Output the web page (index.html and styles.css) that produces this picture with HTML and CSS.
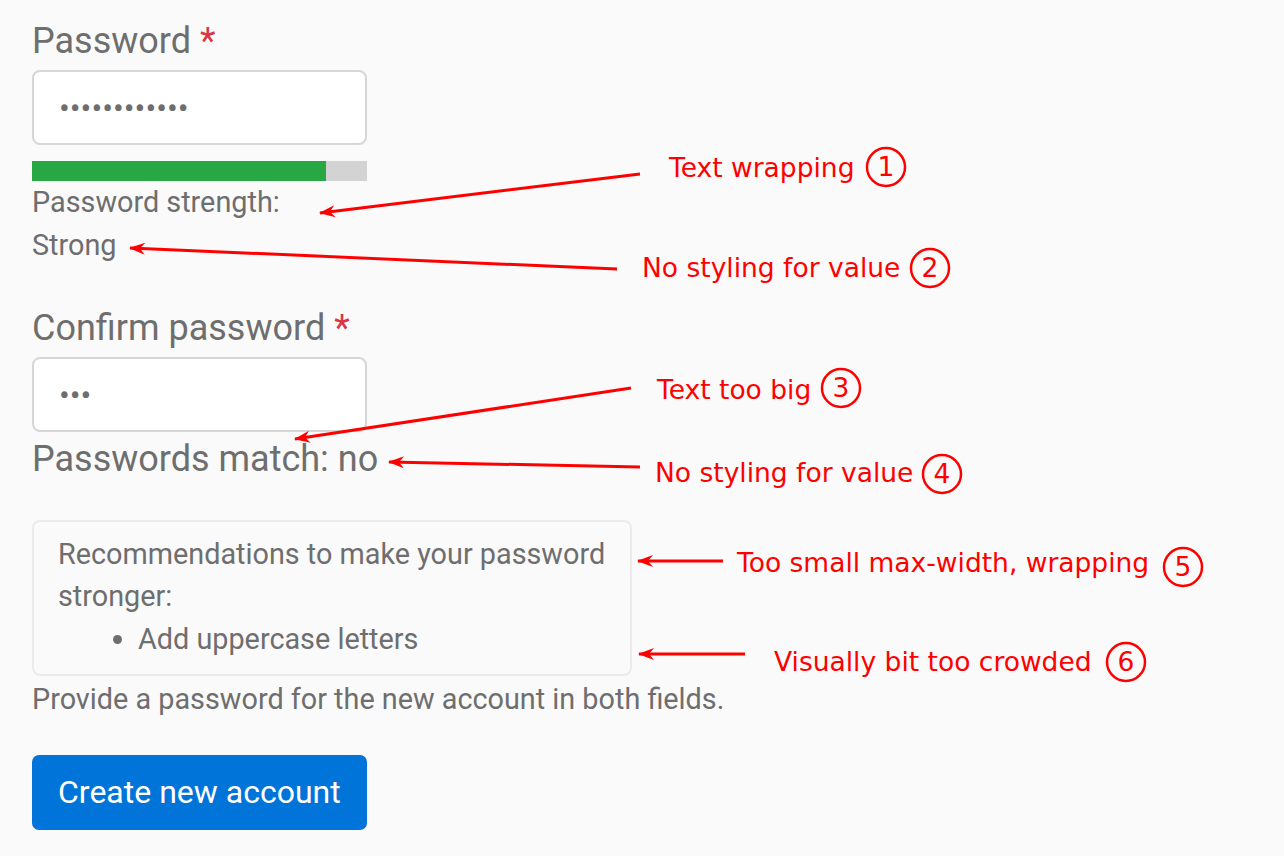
FILE: index.html
```html
<!DOCTYPE html>
<html lang="en">
<head>
    <meta charset="UTF-8">
    <meta name="viewport" content="width=device-width, initial-scale=1.0">
    <title>Create new account</title>
    <link rel="stylesheet" href="styles.css">
</head>
<body>

<form class="signup" onsubmit="return false">
    <div class="field">
        <label class="field-label" for="pass1">Password <span class="req">*</span></label>
        <input type="password" id="pass1" class="text-input" value="aZ8kq2mLp4vx">
        <div class="strength-bar">
            <div class="strength-fill" style="width: 87.8%"></div>
        </div>
        <div class="strength-text">Password strength: <span class="strength-value">Strong</span></div>
    </div>

    <div class="field field-confirm">
        <label class="field-label" for="pass2">Confirm password <span class="req">*</span></label>
        <input type="password" id="pass2" class="text-input" value="abc">
        <div class="match-text">Passwords match: <span class="match-value">no</span></div>
    </div>

    <div class="recommendations">
        Recommendations to make your password stronger:
        <ul>
            <li>Add uppercase letters</li>
        </ul>
    </div>
    <div class="description">Provide a password for the new account in both fields.</div>

    <button type="submit" class="submit-btn">Create new account</button>
</form>

<!-- review notes drawn on top of the form -->
<svg class="notes" width="1284" height="856" viewBox="0 0 1284 856">
    <defs>
        <marker id="head" markerUnits="userSpaceOnUse" markerWidth="18" markerHeight="14"
                viewBox="-16 -7 18 14" refX="0" refY="0" orient="auto">
            <path d="M1,0 L-15,-6 L-10,0 L-15,6 Z" fill="#ff0000"/>
        </marker>
    </defs>
    <g class="arrows">
        <line x1="640" y1="174" x2="320" y2="213" marker-end="url(#head)"/>
        <line x1="617" y1="269" x2="130" y2="248" marker-end="url(#head)"/>
        <line x1="631" y1="388" x2="295" y2="439" marker-end="url(#head)"/>
        <line x1="640" y1="467" x2="389" y2="462" marker-end="url(#head)"/>
        <line x1="723" y1="561" x2="638" y2="561" marker-end="url(#head)"/>
        <line x1="745" y1="654" x2="639" y2="654" marker-end="url(#head)"/>
    </g>
    <g class="labels">
        <text x="669" y="177">Text wrapping</text>
        <text x="642" y="277">No styling for value</text>
        <text x="657" y="399">Text too big</text>
        <text x="655" y="482">No styling for value</text>
        <text x="737" y="572">Too small max-width, wrapping</text>
        <text x="774" y="671">Visually bit too crowded</text>
    </g>
    <g class="badges">
        <circle cx="886" cy="167" r="19"/>
        <circle cx="930" cy="268" r="19"/>
        <circle cx="841" cy="388" r="19"/>
        <circle cx="942" cy="474" r="19"/>
        <circle cx="1183" cy="567" r="19"/>
        <circle cx="1126" cy="662" r="19"/>
    </g>
    <g class="badge-nums">
        <text x="886" y="176">1</text>
        <text x="930" y="277">2</text>
        <text x="841" y="397">3</text>
        <text x="942" y="483">4</text>
        <text x="1183" y="576">5</text>
        <text x="1126" y="671">6</text>
    </g>
</svg>

</body>
</html>
```

FILE: styles.css
```css
body {
    margin: 0;
    background-color: #fafafa;
    font-family: Roboto, "Liberation Sans", sans-serif;
    color: #6e6e6e;
    position: relative;
    overflow: hidden;
}
.signup {
    padding: 15px 32px 0;
    font-size: 28.8px;
    line-height: 42.75px;
}
.field-label {
    display: block;
    font-size: 36px;
    line-height: 53.4px;
    margin-bottom: 2px;
}
.req {
    color: #dc3545;
}
.text-input {
    display: block;
    box-sizing: border-box;
    width: 335px;
    height: 75px;
    margin: 0;
    padding: 0 25px;
    border: 2px solid #d6d6d6;
    border-radius: 8px;
    background: #fff;
    font-family: inherit;
    font-size: 32px;
    color: #6e6e6e;
    outline: none;
}
.strength-bar {
    width: 335px;
    height: 20px;
    margin-top: 16px;
    background-color: #d3d3d3;
}
.strength-fill {
    height: 100%;
    background-color: #28a745;
}
.strength-text {
    width: 335px;
}
.field-confirm {
    margin-top: 35px;
}
.match-text {
    margin-top: 1px;
    font-size: 36px;
    line-height: 53.4px;
}
.recommendations {
    box-sizing: border-box;
    width: 600px;
    margin-top: 33px;
    padding: 11px 16px 13px 24px;
    border: 2px solid #ebebeb;
    border-radius: 8px;
}
.recommendations ul {
    margin: 0;
    padding-left: 80px;
}
.description {
    margin-top: 2px;
}
.submit-btn {
    display: block;
    height: 75px;
    margin-top: 34px;
    padding: 0 26px;
    border: none;
    border-radius: 7px;
    background-color: #0074d9;
    color: #fff;
    font-family: inherit;
    font-size: 32px;
    cursor: pointer;
}

.notes {
    position: absolute;
    top: 0;
    left: 0;
    pointer-events: none;
}
.notes line {
    stroke: #ff0000;
    stroke-width: 3;
}
.notes text {
    font-family: "DejaVu Sans", sans-serif;
    font-size: 26.5px;
    fill: #ff0000;
}
.notes circle {
    fill: none;
    stroke: #ff0000;
    stroke-width: 2.5;
}
.badge-nums text {
    text-anchor: middle;
}
```
